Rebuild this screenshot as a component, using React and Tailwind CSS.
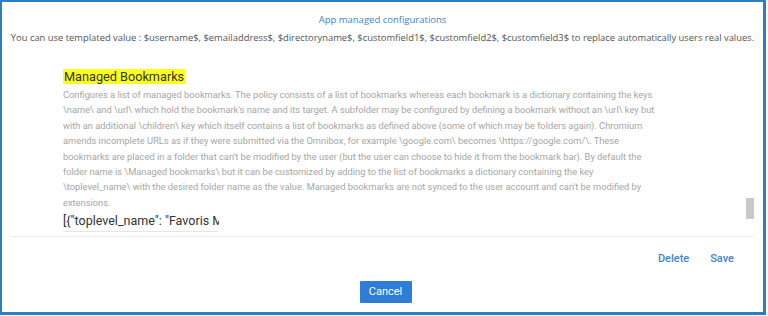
import React from "react";

const lines = [
  "Configures a list of managed bookmarks. The policy consists of a list of bookmarks whereas each bookmark is a dictionary containing the keys",
  "\\name\\ and \\url\\ which hold the bookmark's name and its target. A subfolder may be configured by defining a bookmark without an \\url\\ key but",
  "with an additional \\children\\ key which itself contains a list of bookmarks as defined above (some of which may be folders again). Chromium",
  "amends incomplete URLs as if they were submitted via the Omnibox, for example \\google.com\\ becomes \\https://google.com/\\. These",
  "bookmarks are placed in a folder that can't be modified by the user (but the user can choose to hide it from the bookmark bar). By default the",
  "folder name is \\Managed bookmarks\\ but it can be customized by adding to the list of bookmarks a dictionary containing the key",
  "\\toplevel_name\\ with the desired folder name as the value. Managed bookmarks are not synced to the user account and can't be modified by",
  "extensions.",
];

const App = () => {
  return (
    <div className="w-[767px] h-[316px] bg-white overflow-hidden">
      <div className="w-[766px] h-[315px] border-[3px] border-t-2 border-l-2 border-[#2b7dc5] flex flex-col">
        <div className="pt-[11px] text-center text-[9.5px] leading-[14px] text-[#3b86c6] font-['Open_Sans',sans-serif]">
          App managed configurations
        </div>
        <div className="mt-[4px] text-center text-[9.4px] leading-[14px] text-[#555] font-['Open_Sans',sans-serif] whitespace-nowrap">
          You can use templated value : $username$, $emailaddress$, $directoryname$, $customfield1$, $customfield2$, $customfield3$ to replace automatically users real values.
        </div>

        <div className="relative mx-[9px] mt-[4px] h-[188px] border-b border-[#eeeeee] overflow-hidden font-['Roboto',sans-serif]">
          <div className="pl-[52px] pt-[18px]">
            <div className="leading-[18px]">
              <span className="bg-[#fbff1a] px-[1px] text-[12.7px] leading-[18px] text-[#333]">
                Managed Bookmarks
              </span>
            </div>
            <div className="mt-[1px] text-[9.3px] leading-[15.4px] text-[#a6a6a6]">
              {lines.map((l, i) => (
                <div key={i} className="whitespace-nowrap">{l}</div>
              ))}
            </div>
            <div className="mt-[2px] w-[156px] overflow-hidden whitespace-nowrap border-b border-[#e6e6e6] pb-[1px] text-[12.5px] leading-[18px] text-[#333]">
              [{"{"}"toplevel_name": "Favoris Managés"{"}"}]
            </div>
          </div>
          <div className="absolute right-0 top-[149px] w-[8px] h-[21px] bg-[#c9c9c9]" />
        </div>

        <div className="flex justify-end gap-[21px] pr-[29px] pt-[15px] text-[11px] leading-[14px] font-medium text-[#3f84d2] font-['Roboto',sans-serif]">
          <span>Delete</span>
          <span>Save</span>
        </div>

        <div className="flex justify-center pt-[15px] pl-[6px]">
          <button
            type="button"
            className="w-[52px] h-[22px] bg-[#2f7dd7] text-white text-[11px] font-['Roboto',sans-serif] rounded-[1px]"
          >
            Cancel
          </button>
        </div>
      </div>
    </div>
  );
};

export default App;
